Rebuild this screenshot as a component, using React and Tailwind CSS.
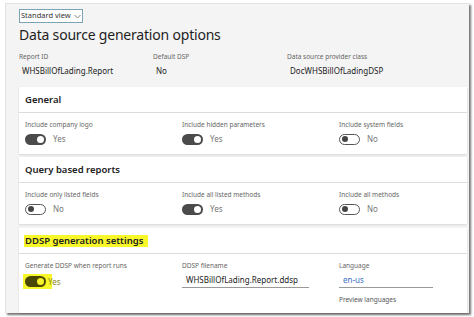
import React from "react";

const font = { fontFamily: '"Noto Sans", "Open Sans", sans-serif' };

const Toggle = ({ on, marked }) => {
  if (marked) {
    return (
      <div className="flex items-center">
        <div className="flex items-center bg-[#f7f72a] py-[2px] pl-[2px] pr-[6px] -ml-[2px]">
          <div className="w-[21px] h-[11px] rounded-full bg-[#4a4700] flex items-center justify-end pr-[2px]">
            <div className="w-[7px] h-[7px] rounded-full bg-[#f6f22c]" />
          </div>
        </div>
        <span className="-ml-[4px] text-[8px] text-[#8a8a20]">Yes</span>
      </div>
    );
  }
  return (
    <div className="flex items-center gap-[7px]">
      {on ? (
        <div className="w-[21px] h-[11px] rounded-full bg-[#4b4b4b] flex items-center justify-end pr-[2px]">
          <div className="w-[7px] h-[7px] rounded-full bg-white" />
        </div>
      ) : (
        <div className="w-[21px] h-[11px] rounded-full border border-[#555] bg-white flex items-center pl-[2px]">
          <div className="w-[6px] h-[6px] rounded-full bg-[#444]" />
        </div>
      )}
      <span className="text-[8px] text-[#777]">{on ? "Yes" : "No"}</span>
    </div>
  );
};

const Field = ({ label, on }) => (
  <div className="flex flex-col gap-[4px]">
    <span className="text-[6.5px] text-[#666] leading-[9px]">{label}</span>
    <Toggle on={on} />
  </div>
);

const Card = ({ title, children, marked, className = "" }) => (
  <div className={`bg-white shadow-[0_1px_2px_rgba(0,0,0,0.12)] ${className}`}>
    <div className="h-[26px] flex items-center px-[6px] border-b border-[#dcdcdc]">
      <span
        className={`text-[9.5px] font-semibold text-[#222] leading-[12px] ${
          marked ? "bg-[#f7f72a] pl-[1px] pr-[5px] -ml-[1px]" : ""
        }`}
      >
        {title}
      </span>
    </div>
    {children}
  </div>
);

export default function App() {
  return (
    <div className="w-[474px] h-[317px] bg-white pt-[3px] pl-[5px]" style={font}>
      <div className="w-[464px] h-[310px] bg-[#f4f4f4] border-l border-t border-[#e2e2e2] shadow-[2px_2px_2px_rgba(0,0,0,0.55)] pl-[13px] pr-[2px] pt-[5px] flex flex-col">
        <div className="flex">
          <div className="h-[14px] border border-[#7aa3b8] bg-white flex items-center gap-[3px] px-[1px]">
            <span className="text-[7.5px] text-[#333] leading-none">Standard view</span>
            <svg width="7" height="5" viewBox="0 0 7 5">
              <path d="M0.5 1 L3.5 4 L6.5 1" fill="none" stroke="#666" strokeWidth="0.8" />
            </svg>
          </div>
        </div>
        <div className="text-[14px] leading-[20px] tracking-[-0.2px] text-[#1e1e1e] mt-[2px]">Data source generation options</div>

        <div className="grid grid-cols-[134px_134px_1fr] mt-[7px]">
          {[
            ["Report ID", "WHSBillOfLading.Report"],
            ["Default DSP", "No"],
            ["Data source provider class", "DocWHSBillOfLadingDSP"],
          ].map(([l, v]) => (
            <div key={l} className="flex flex-col gap-[5px]">
              <span className="text-[6.5px] text-[#666] leading-[9px]">{l}</span>
              <span className="text-[8px] text-[#222] leading-[10px] pl-[3px]">{v}</span>
            </div>
          ))}
        </div>

        <Card title="General" className="mt-[11px] h-[67px]">
          <div className="grid grid-cols-[157px_157px_1fr] px-[6px] pt-[7px]">
            <Field label="Include company logo" on />
            <Field label="Include hidden parameters" on />
            <Field label="Include system fields" on={false} />
          </div>
        </Card>

        <Card title="Query based reports" className="mt-[3px] h-[67px]">
          <div className="grid grid-cols-[157px_157px_1fr] px-[6px] pt-[7px]">
            <Field label="Include only listed fields" on={false} />
            <Field label="Include all listed methods" on />
            <Field label="Include all methods" on={false} />
          </div>
        </Card>

        <Card title="DDSP generation settings" marked className="mt-[4px] flex-1">
          <div className="grid grid-cols-[157px_157px_1fr] px-[6px] pt-[7px]">
            <div className="flex flex-col gap-[4px]">
              <span className="text-[6.5px] text-[#666] leading-[9px]">Generate DDSP when report runs</span>
              <Toggle marked />
            </div>
            <div className="flex flex-col gap-[2px]">
              <span className="text-[6.5px] text-[#666] leading-[9px]">DDSP filename</span>
              <div className="w-[127px] border-b border-[#999] pl-[4px] pb-[2px] leading-[11px]">
                <span className="text-[8px] text-[#222] leading-[11px]">WHSBillOfLading.Report.ddsp</span>
              </div>
            </div>
            <div className="flex flex-col gap-[2px]">
              <span className="text-[6.5px] text-[#666] leading-[9px]">Language</span>
              <div className="w-[94px] border-b border-[#999] pl-[4px] pb-[2px] leading-[11px]">
                <span className="text-[8px] text-[#3b6fc6] leading-[11px]">en-us</span>
              </div>
              <span className="text-[6.5px] text-[#555] leading-[9px] mt-[5px]">Preview languages</span>
            </div>
          </div>
        </Card>
      </div>
    </div>
  );
}
